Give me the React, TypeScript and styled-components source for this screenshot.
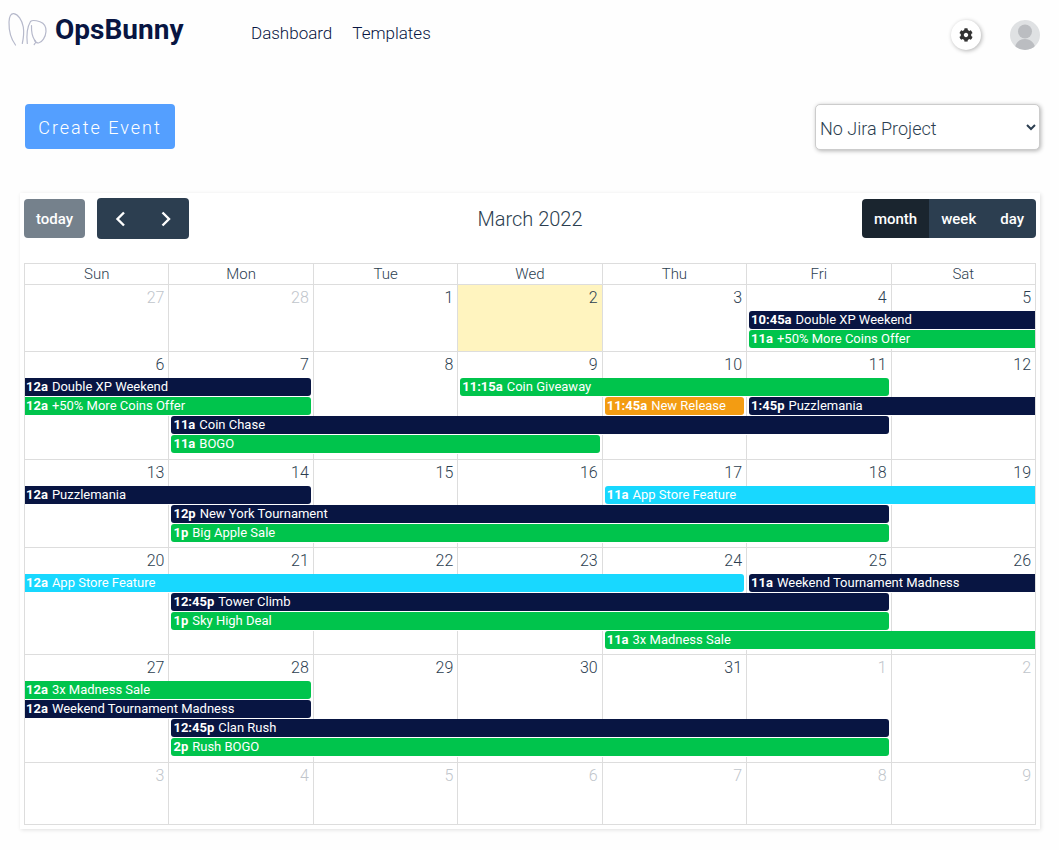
import React from 'react';
import styled, { createGlobalStyle, css } from 'styled-components';
import { FaCog } from 'react-icons/fa';

const NAVY = '#081542';
const GREEN = '#00c44c';
const CYAN = '#18d8ff';
const ORANGE = '#f39c12';

const GlobalStyle = createGlobalStyle`
  *, *::before, *::after { box-sizing: border-box; }
  body {
    margin: 0;
    background: #fefefe;
    color: #2c3e50;
    font-family: Roboto, "Liberation Sans", sans-serif;
    font-size: 16px;
    font-weight: 300;
  }
  button, select { font-family: inherit; }
`;

const Header = styled.header`
  display: flex;
  align-items: flex-start;
  padding: 8px 19px 0 8px;
  height: 64px;
`;

const Brand = styled.a`
  display: flex;
  align-items: center;
  gap: 6px;
  width: 243px;
  height: 44px;
  color: ${NAVY};
  text-decoration: none;
`;

const BrandName = styled.span`
  font-size: 28px;
  font-weight: 700;
  line-height: 44px;
`;

const Nav = styled.nav`
  display: flex;
  flex: 1;
  gap: 20px;
  height: 50px;
  align-items: center;
`;

const NavLink = styled.a`
  color: ${NAVY};
  font-size: 17px;
  text-decoration: none;
`;

const Account = styled.div`
  display: flex;
  gap: 29px;
  padding-top: 12px;
`;

const RoundButton = styled.button`
  display: flex;
  align-items: center;
  justify-content: center;
  width: 30px;
  height: 30px;
  padding: 0;
  border: 0;
  border-radius: 50%;
  background: #fff;
  color: #333;
  box-shadow: 1px 1px 4px rgba(0, 0, 0, 0.3);
  overflow: hidden;
`;

const AvatarButton = styled(RoundButton)`
  background: #dfe1e3;
  box-shadow: none;
`;

const Actions = styled.section`
  display: flex;
  justify-content: space-between;
  padding: 40px 19px 0 25px;
`;

const CreateButton = styled.button`
  width: 150px;
  height: 45px;
  padding: 2px 0 0;
  border: 0;
  border-radius: 4px;
  background: #549fff;
  color: #fff;
  font-size: 18px;
  font-weight: 300;
  letter-spacing: 2px;
`;

const ProjectSelect = styled.select`
  width: 225px;
  height: 46px;
  padding: 2px 0 0;
  border: 1px solid #ccc;
  border-radius: 5px;
  background: #fff;
  color: #2c3e50;
  font-size: 18px;
  font-weight: 300;
  box-shadow: 1px 1px 4px rgba(0, 0, 0, 0.3);
`;

const Card = styled.main`
  margin: 43px 19px 20px 20px;
  padding: 5px 4px 4px;
  background: #fff;
  box-shadow: 1px 1px 4px rgba(0, 0, 0, 0.12);
`;

const Toolbar = styled.div`
  display: grid;
  grid-template-columns: 1fr auto 1fr;
  align-items: center;
  height: 41px;
  margin-bottom: 24px;
`;

const ToolGroup = styled.div<{ $end?: boolean }>`
  display: flex;
  align-items: center;
  justify-self: ${(p) => (p.$end ? 'end' : 'start')};
`;

const Title = styled.h2`
  margin: 0;
  font-size: 20px;
  font-weight: 300;
`;

const ToolButton = styled.button<{ $active?: boolean }>`
  height: 39px;
  padding: 0 12px;
  border: 0;
  background: ${(p) => (p.$active ? '#1a252f' : '#2c3e50')};
  color: #fff;
  font-size: 15px;
  font-weight: 500;
  &:first-child { border-radius: 4px 0 0 4px; }
  &:last-child { border-radius: 0 4px 4px 0; }
`;

const TodayButton = styled(ToolButton)`
  margin-right: 12px;
  opacity: 0.65;
  &:first-child { border-radius: 4px; }
`;

const ArrowGroup = styled.div`
  display: flex;
`;

const ArrowButton = styled(ToolButton)`
  display: flex;
  align-items: center;
  justify-content: center;
  width: 46px;
  height: 41px;
  padding: 0;
`;

const Month = styled.table`
  width: 100%;
  table-layout: fixed;
  border-collapse: collapse;
  border: 1px solid #ddd;
`;

const Weekday = styled.th`
  height: 21px;
  padding: 1px 0 0;
  border: 1px solid #ddd;
  font-size: 15px;
  font-weight: 300;
  line-height: 19px;
`;

const Week = styled.tbody`
  border-top: 1px solid #ddd;
`;

const todayFill = css`background: #fff4bf;`;

const DateCell = styled.td<{ $today?: boolean; $muted?: boolean }>`
  height: 26px;
  padding: 0 4px;
  border: 1px solid #ddd;
  border-bottom: 0;
  color: ${(p) => (p.$muted ? '#c0c5cb' : '#2c3e50')};
  font-size: 16px;
  line-height: 25px;
  text-align: right;
  ${(p) => p.$today && todayFill}
`;

const Slot = styled.td<{ $today?: boolean; $height?: number }>`
  height: ${(p) => p.$height ?? 19}px;
  padding: 0;
  border: solid #ddd;
  border-width: 0 1px;
  ${(p) => p.$today && todayFill}
`;

const Bar = styled.div<{ $color: string; $from?: boolean; $to?: boolean }>`
  height: 18px;
  margin: 0 ${(p) => (p.$to ? 0 : 2)}px 1px ${(p) => (p.$from ? 0 : 2)}px;
  padding: 0 ${(p) => (p.$from ? 1 : 2)}px;
  border-radius: ${(p) => (p.$from ? '0' : '3px')} ${(p) => (p.$to ? '0 0' : '3px 3px')} ${(p) => (p.$from ? '0' : '3px')};
  background: ${(p) => p.$color};
  color: #fff;
  font-size: 13px;
  font-weight: 400;
  line-height: 18px;
  white-space: nowrap;
  overflow: hidden;
`;

const Time = styled.span`
  margin-right: 4px;
  font-weight: 700;
`;

type CalEvent = {
  col: number;
  span: number;
  time: string;
  title: string;
  color: string;
  from?: boolean;
  to?: boolean;
};

type WeekData = { days: number[]; rows: CalEvent[][]; rest: number };

const ev = (col: number, span: number, time: string, title: string, color: string, edge = ''): CalEvent => ({
  col, span, time, title, color, from: edge === 'from', to: edge === 'to',
});

// Negative day numbers belong to the neighbouring months.
const weeks: WeekData[] = [
  {
    days: [-27, -28, 1, 2, 3, 4, 5],
    rest: 3,
    rows: [
      [ev(5, 2, '10:45a', 'Double XP Weekend', NAVY, 'to')],
      [ev(5, 2, '11a', '+50% More Coins Offer', GREEN, 'to')],
    ],
  },
  {
    days: [6, 7, 8, 9, 10, 11, 12],
    rest: 6,
    rows: [
      [ev(0, 2, '12a', 'Double XP Weekend', NAVY, 'from'), ev(3, 3, '11:15a', 'Coin Giveaway', GREEN)],
      [
        ev(0, 2, '12a', '+50% More Coins Offer', GREEN, 'from'),
        ev(4, 1, '11:45a', 'New Release', ORANGE),
        ev(5, 2, '1:45p', 'Puzzlemania', NAVY, 'to'),
      ],
      [ev(1, 5, '11a', 'Coin Chase', NAVY)],
      [ev(1, 3, '11a', 'BOGO', GREEN)],
    ],
  },
  {
    days: [13, 14, 15, 16, 17, 18, 19],
    rest: 5,
    rows: [
      [ev(0, 2, '12a', 'Puzzlemania', NAVY, 'from'), ev(4, 3, '11a', 'App Store Feature', CYAN, 'to')],
      [ev(1, 5, '12p', 'New York Tournament', NAVY)],
      [ev(1, 5, '1p', 'Big Apple Sale', GREEN)],
    ],
  },
  {
    days: [20, 21, 22, 23, 24, 25, 26],
    rest: 5,
    rows: [
      [ev(0, 5, '12a', 'App Store Feature', CYAN, 'from'), ev(5, 2, '11a', 'Weekend Tournament Madness', NAVY, 'to')],
      [ev(1, 5, '12:45p', 'Tower Climb', NAVY)],
      [ev(1, 5, '1p', 'Sky High Deal', GREEN)],
      [ev(4, 3, '11a', '3x Madness Sale', GREEN, 'to')],
    ],
  },
  {
    days: [27, 28, 29, 30, 31, -1, -2],
    rest: 6,
    rows: [
      [ev(0, 2, '12a', '3x Madness Sale', GREEN, 'from')],
      [ev(0, 2, '12a', 'Weekend Tournament Madness', NAVY, 'from')],
      [ev(1, 5, '12:45p', 'Clan Rush', NAVY)],
      [ev(1, 5, '2p', 'Rush BOGO', GREEN)],
    ],
  },
  { days: [-3, -4, -5, -6, -7, -8, -9], rest: 36, rows: [] },
];

const TODAY = 2;

function EventRow({ events, days }: { events: CalEvent[]; days: number[] }) {
  const cells: React.ReactNode[] = [];
  let col = 0;
  while (col < 7) {
    const e = events.find((x) => x.col === col);
    if (e) {
      cells.push(
        <Slot key={col} colSpan={e.span}>
          <Bar $color={e.color} $from={e.from} $to={e.to}>
            <Time>{e.time}</Time>
            {e.title}
          </Bar>
        </Slot>,
      );
      col += e.span;
    } else {
      cells.push(<Slot key={col} $today={days[col] === TODAY} />);
      col += 1;
    }
  }
  return <tr>{cells}</tr>;
}

function BunnyEars() {
  return (
    <svg width="41" height="38" viewBox="8 9 41 38" fill="none" stroke="#b6b9cb" strokeWidth="1.2" strokeLinecap="round" aria-hidden="true">
      <path d="M15.5 43C11 37 8.8 29 9 20C9.200 14 11 11.3 13.8 11.6C18 12 22 18 23.3 25C24.200 31 23.500 36 22.300 41.500" />
      <path d="M27.300 41.500C26.600 35 27.200 25 30.500 19.500C32 18 36 18.500 40 19.800C44 21.300 46.300 25 46 29.500C45.700 35 42 40.500 38.500 41C36.500 41 35 39.500 34.500 38" />
      <path d="M31.500 23.500C31.300 29 32 34 34.500 38C36 39.500 36.500 40 34.200 42.500" />
    </svg>
  );
}

function Chevron({ d }: { d: string }) {
  return (
    <svg width="16" height="16" viewBox="0 0 16 16" fill="none" stroke="currentColor" strokeWidth="2.4" aria-hidden="true">
      <path d={d} />
    </svg>
  );
}

function Silhouette() {
  return (
    <svg width="30" height="30" viewBox="0 0 30 30" fill="#bbbdc1" aria-hidden="true">
      <circle cx="15" cy="11.500" r="7" />
      <path d="M4.500 30C5 23 9 19 15 19S25 23 25.500 30Z" />
    </svg>
  );
}

export default function App() {
  return (
    <>
      <GlobalStyle />
      <Header>
        <Brand href="#">
          <BunnyEars />
          <BrandName>OpsBunny</BrandName>
        </Brand>
        <Nav>
          <NavLink href="#dashboard">Dashboard</NavLink>
          <NavLink href="#templates">Templates</NavLink>
        </Nav>
        <Account>
          <RoundButton aria-label="Settings"><FaCog size={14} /></RoundButton>
          <AvatarButton aria-label="Account"><Silhouette /></AvatarButton>
        </Account>
      </Header>
      <Actions>
        <CreateButton>Create Event</CreateButton>
        <ProjectSelect aria-label="Jira project">
          <option>No Jira Project</option>
        </ProjectSelect>
      </Actions>
      <Card>
        <Toolbar>
          <ToolGroup>
            <TodayButton disabled>today</TodayButton>
            <ArrowGroup>
              <ArrowButton aria-label="Previous month"><Chevron d="M12 1.500L5.500 8L12 14.500" /></ArrowButton>
              <ArrowButton aria-label="Next month"><Chevron d="M4.500 1.500L11 8L4.500 14.500" /></ArrowButton>
            </ArrowGroup>
          </ToolGroup>
          <Title>March 2022</Title>
          <ToolGroup $end>
            <ToolButton $active>month</ToolButton>
            <ToolButton>week</ToolButton>
            <ToolButton>day</ToolButton>
          </ToolGroup>
        </Toolbar>
        <Month>
          <thead>
            <tr>
              {['Sun', 'Mon', 'Tue', 'Wed', 'Thu', 'Fri', 'Sat'].map((d) => (
                <Weekday key={d} scope="col">{d}</Weekday>
              ))}
            </tr>
          </thead>
          {weeks.map((week, i) => (
            <Week key={i}>
              <tr>
                {week.days.map((d) => (
                  <DateCell key={d} $muted={d < 0} $today={d === TODAY}>{Math.abs(d)}</DateCell>
                ))}
              </tr>
              {week.rows.map((events, r) => (
                <EventRow key={r} events={events} days={week.days} />
              ))}
              <tr>
                {week.days.map((d) => (
                  <Slot key={d} $height={week.rest} $today={d === TODAY} />
                ))}
              </tr>
            </Week>
          ))}
        </Month>
      </Card>
    </>
  );
}
